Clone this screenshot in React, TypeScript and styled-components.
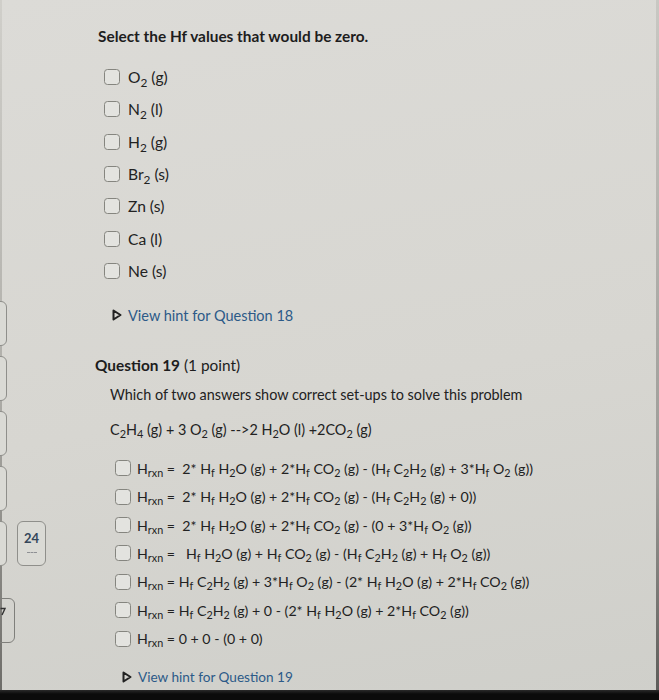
import React from 'react';
import styled, { createGlobalStyle } from 'styled-components';

const Global = createGlobalStyle`
  html, body { margin: 0; padding: 0; }
  body {
    background: #d6d5d0;
    font-family: Lato, "Noto Sans", sans-serif;
    color: #222222;
  }
`;

const Screen = styled.div`
  width: 659px;
  height: 700px;
  overflow: hidden;
  display: flex;
  flex-direction: column;
  background: linear-gradient(170deg, #dcdbd7 0%, #d7d6d1 55%, #cfcfca 100%);
`;

const Body = styled.div`
  flex: 1;
  min-height: 0;
  display: flex;
`;

const Bezel = styled.div`
  height: 10px;
  flex: none;
  background: linear-gradient(#2a2a2a, #0b0b0b 40%);
`;

const LeftEdge = styled.div`
  width: 2px;
  flex: none;
  background: linear-gradient(#d0cfca 0%, #b0afaa 55%, #6e6d69 100%);
`;

const RightEdge = styled.div`
  width: 3px;
  flex: none;
  background: linear-gradient(#c9c8c3 0%, #9b9a96 70%, #5d5c59 100%);
`;

const Sidebar = styled.div`
  width: 50px;
  flex: none;
  display: flex;
  flex-direction: column;
  overflow: visible;
`;

const CardGrid = styled.div`
  margin-top: 301px;
  margin-left: -24px;
  display: grid;
  grid-template-columns: 29px 29px;
  column-gap: 10px;
  row-gap: 10px;
`;

const QCard = styled.div<{ $col?: number }>`
  grid-column: ${(p) => p.$col ?? 1};
  height: 45px;
  box-sizing: border-box;
  border: 1px solid #8f8f8b;
  border-radius: 6px;
  background: #dadad5;
  display: flex;
  flex-direction: column;
  align-items: center;
  padding-top: 9px;
  gap: 7px;
`;

const CardNum = styled.span`
  font-weight: 700;
  font-size: 13px;
  line-height: 14px;
  color: #34465a;
`;

const CardDash = styled.span`
  width: 10px;
  height: 1px;
  border-top: 1px dashed #8e9094;
`;

const NavButton = styled.div`
  margin-top: 32px;
  margin-left: -24px;
  width: 37px;
  height: 45px;
  box-sizing: border-box;
  border: 1px solid #7f7f7b;
  border-radius: 6px;
  display: flex;
  justify-content: flex-end;
  padding: 8px 8px 0 0;
`;

const Main = styled.div`
  flex: 1;
  padding-left: 46px;
  padding-top: 26px;
  display: flex;
  flex-direction: column;
  align-items: flex-start;
`;

const Title = styled.div`
  font-weight: 700;
  font-size: 15.4px;
  line-height: 20px;
  color: #1d1d1d;
`;

const List = styled.div<{ $top: number; $left: number }>`
  margin-top: ${(p) => p.$top}px;
  margin-left: ${(p) => p.$left}px;
  display: flex;
  flex-direction: column;
`;

const Row = styled.label<{ $h: number; $gap: number; $size: number }>`
  height: ${(p) => p.$h}px;
  display: flex;
  align-items: center;
  gap: ${(p) => p.$gap}px;
  font-size: ${(p) => p.$size}px;
  white-space: pre;
  color: #222;
`;

const Box = styled.span`
  width: 16px;
  height: 16px;
  box-sizing: border-box;
  border: 1.5px solid #85857f;
  border-radius: 3.5px;
  background: #e3e3df;
  flex: none;
`;

const Sub = styled.sub`
  font-size: 0.76em;
  vertical-align: -0.3em;
  line-height: 0;
`;

const Hint = styled.div<{ $top: number; $left: number; $size: number }>`
  margin-top: ${(p) => p.$top}px;
  margin-left: ${(p) => p.$left}px;
  height: 20px;
  display: flex;
  align-items: center;
  gap: 6px;
  font-size: ${(p) => p.$size}px;
  color: #2c5a88;
`;

const QHead = styled.div`
  margin-top: 29px;
  margin-left: -3px;
  line-height: 22px;
  font-size: 15.4px;
  color: #1d1d1d;
`;

const QBold = styled.span`
  font-weight: 700;
`;

const Prompt = styled.div<{ $top: number }>`
  margin-top: ${(p) => p.$top}px;
  margin-left: 12px;
  line-height: 20px;
  font-size: 14.4px;
  color: #222;
  white-space: nowrap;
`;

function chem(s: string) {
  const parts = s.split(/(_\{[^}]*\})/);
  return parts.map((p, i) =>
    p.startsWith('_{') ? <Sub key={i}>{p.slice(2, -1)}</Sub> : <React.Fragment key={i}>{p}</React.Fragment>
  );
}

const Tri = () => (
  <svg width="10" height="12" viewBox="0 0 10 12">
    <path d="M1.5 1.5 L8.5 6 L1.5 10.5 Z" fill="none" stroke="#222" strokeWidth="2" strokeLinejoin="round" />
  </svg>
);

const Mark = () => (
  <svg width="6" height="10" viewBox="0 0 6 10">
    <path d="M0.5 1.5 L5 1.5 L2 8" fill="none" stroke="#333" strokeWidth="1.4" />
  </svg>
);

const elements = ['O_{2} (g)', 'N_{2} (l)', 'H_{2} (g)', 'Br_{2} (s)', 'Zn (s)', 'Ca (l)', 'Ne (s)'];

const options = [
  'H_{rxn} =  2* H_{f} H_{2}O (g) + 2*H_{f} CO_{2} (g) - (H_{f} C_{2}H_{2} (g) + 3*H_{f} O_{2} (g))',
  'H_{rxn} =  2* H_{f} H_{2}O (g) + 2*H_{f} CO_{2} (g) - (H_{f} C_{2}H_{2} (g) + 0))',
  'H_{rxn} =  2* H_{f} H_{2}O (g) + 2*H_{f} CO_{2} (g) - (0 + 3*H_{f} O_{2} (g))',
  'H_{rxn} =   H_{f} H_{2}O (g) + H_{f} CO_{2} (g) - (H_{f} C_{2}H_{2} (g) + H_{f} O_{2} (g))',
  'H_{rxn} = H_{f} C_{2}H_{2} (g) + 3*H_{f} O_{2} (g) - (2* H_{f} H_{2}O (g) + 2*H_{f} CO_{2} (g))',
  'H_{rxn} = H_{f} C_{2}H_{2} (g) + 0 - (2* H_{f} H_{2}O (g) + 2*H_{f} CO_{2} (g))',
  'H_{rxn} = 0 + 0 - (0 + 0)',
];

export default function App() {
  return (
    <>
      <Global />
      <Screen>
        <Body>
          <LeftEdge />
          <Sidebar>
            <CardGrid>
              <QCard>
                <CardDash />
              </QCard>
              <QCard>
                <CardDash />
              </QCard>
              <QCard>
                <CardDash />
              </QCard>
              <QCard>
                <CardDash />
              </QCard>
              <QCard>
                <CardDash />
              </QCard>
              <QCard $col={2}>
                <CardNum>24</CardNum>
                <CardDash />
              </QCard>
            </CardGrid>
            <NavButton>
              <Mark />
            </NavButton>
          </Sidebar>
          <Main>
            <Title>Select the Hf values that would be zero.</Title>
            <List $top={15} $left={6}>
              {elements.map((e) => (
                <Row key={e} $h={32.3} $gap={8} $size={15.6}>
                  <Box />
                  <span>{chem(e)}</span>
                </Row>
              ))}
            </List>
            <Hint $top={18} $left={14} $size={14.5}>
              <Tri />
              <span>View hint for Question 18</span>
            </Hint>
            <QHead>
              <QBold>Question 19</QBold> (1 point)
            </QHead>
            <Prompt $top={9}>Which of two answers show correct set-ups to solve this problem</Prompt>
            <Prompt $top={15}>{chem('C_{2}H_{4} (g) + 3 O_{2} (g) -->2 H_{2}O (l) +2CO_{2} (g)')}</Prompt>
            <List $top={14} $left={17}>
              {options.map((o, i) => (
                <Row key={i} $h={28.4} $gap={6} $size={14.2}>
                  <Box />
                  <span>{chem(o)}</span>
                </Row>
              ))}
            </List>
            <Hint $top={14} $left={24} $size={13.6}>
              <Tri />
              <span>View hint for Question 19</span>
            </Hint>
          </Main>
          <RightEdge />
        </Body>
        <Bezel />
      </Screen>
    </>
  );
}
